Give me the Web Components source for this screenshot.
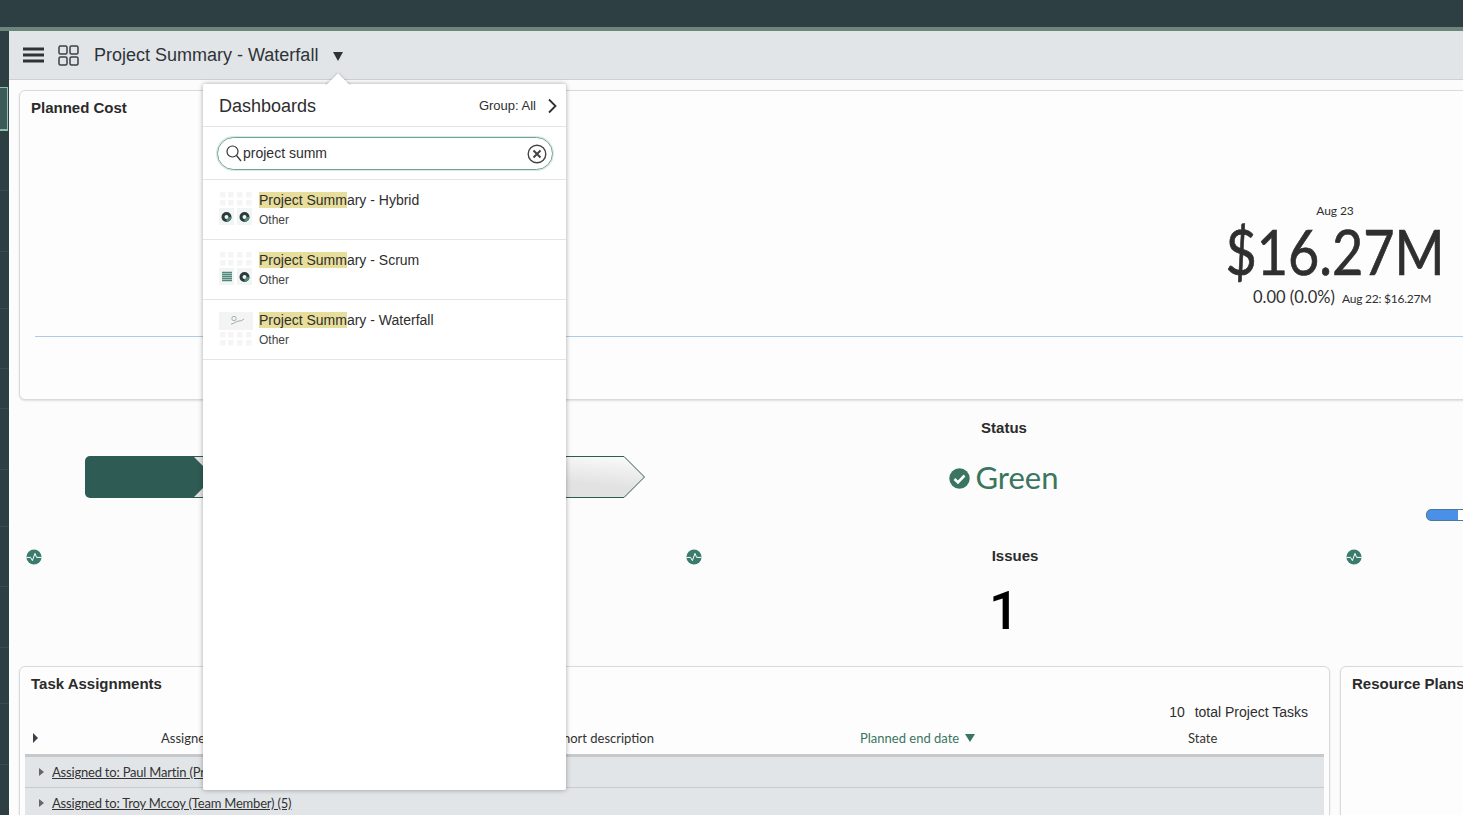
<!DOCTYPE html>
<html lang="en">
<head>
<meta charset="utf-8">
<title>Project Summary - Waterfall</title>
<style>
  html, body { margin: 0; height: 100%; overflow: hidden; background: #fcfcfc; }
  body { font-family: 'Liberation Sans', Arial, sans-serif; color: #2e2e2e; }
</style>
</head>
<body>
<app-shell>
  <dash-header title-text="Project Summary - Waterfall"></dash-header>
  <summary-board></summary-board>
  <dash-popover search="project summ">
    <dash-item kind="hybrid" match="Project Summ" rest="ary - Hybrid" group="Other"></dash-item>
    <dash-item kind="scrum" match="Project Summ" rest="ary - Scrum" group="Other"></dash-item>
    <dash-item kind="waterfall" match="Project Summ" rest="ary - Waterfall" group="Other"></dash-item>
  </dash-popover>
</app-shell>

<script>
const SANS = "'Liberation Sans', Arial, sans-serif";
const SOURCE = "Lato, 'Noto Sans', sans-serif";

class AppShell extends HTMLElement {
  connectedCallback() {
    const root = this.attachShadow({ mode: 'open' });
    // faint separators of the side rail, y of each below the highlighted entry
    const gaps = [60, 61, 57, 60, 40, 61, 57, 60, 61, 56, 61];
    const seps = gaps.map(h => `<b style="height:${h - 1}px"></b>`).join('');
    root.innerHTML = `
      <style>
        :host { display: flex; flex-direction: column; position: relative; width: 100%; height: 815px; overflow: hidden; background: #fcfcfc; }
        .top { height: 27px; background: #2e3f43; flex: none; }
        .strip { height: 4px; background: #6d867b; flex: none; }
        .body { display: flex; flex: 1; min-height: 0; }
        .rail { width: 9px; flex: none; background: #2e3f43; display: flex; flex-direction: column; }
        .rail i { display: block; flex: none; box-sizing: border-box; height: 44px; margin-top: 56px; background: #3b5a58; border: 1px solid #8fc0ae; border-left: 0; border-bottom-width: 2px; width: 8px; }
        .rail b { display: block; flex: none; border-bottom: 1px solid #384b4f; }
        .main { flex: 1; min-width: 0; display: flex; flex-direction: column; overflow: hidden; }
      </style>
      <div class="top"></div>
      <div class="strip"></div>
      <div class="body">
        <div class="rail"><i></i>${seps}</div>
        <div class="main"><slot></slot></div>
      </div>
      <slot name="over"></slot>`;
    this.querySelector('dash-popover').slot = 'over';
  }
}

class DashHeader extends HTMLElement {
  connectedCallback() {
    const root = this.attachShadow({ mode: 'open' });
    root.innerHTML = `
      <style>
        :host { display: flex; align-items: center; height: 48px; flex: none; background: #e2e5e8; border-bottom: 1px solid #ced1d4; box-sizing: content-box; padding-left: 14px; color: #2e3338; }
        .burger { width: 21px; height: 16px; margin-right: 14px; }
        .grid { width: 21px; height: 21px; margin-right: 15px; }
        .title { font: 18px/24px ${SANS}; white-space: nowrap; }
        .tri { width: 0; height: 0; border: 5px solid transparent; border-top: 9px solid #2e3338; border-bottom: 0; margin-left: 15px; margin-top: 2px; }
      </style>
      <svg class="burger" viewBox="0 0 21 16"><path d="M0 2h21M0 8h21M0 14h21" stroke="#2e3338" stroke-width="3"/></svg>
      <svg class="grid" viewBox="0 0 21 21" fill="none" stroke="#3a4045" stroke-width="1.5">
        <rect x="1" y="1" width="8" height="8" rx="1.5"/><rect x="12" y="1" width="8" height="8" rx="1.5"/>
        <rect x="1" y="12" width="8" height="8" rx="1.5"/><rect x="12" y="12" width="8" height="8" rx="1.5"/>
      </svg>
      <span class="title">${this.getAttribute('title-text')}</span>
      <span class="tri"></span>`;
  }
}

class HealthIcon extends HTMLElement {
  connectedCallback() {
    const root = this.attachShadow({ mode: 'open' });
    root.innerHTML = `
      <style>:host { display: block; width: 16px; height: 16px; } svg { display: block; }</style>
      <svg width="16" height="16" viewBox="0 0 16 16"><circle cx="8" cy="8" r="7.6" fill="#3b7b6d"/>
      <path d="M0.5 8.4H4.6L6.4 11.6L9 4.4L10.6 8.4H15.5" fill="none" stroke="#fff" stroke-width="1"/></svg>`;
  }
}

class SummaryBoard extends HTMLElement {
  connectedCallback() {
    const root = this.attachShadow({ mode: 'open' });
    root.innerHTML = `
      <style>
        :host { display: block; font-family: ${SANS}; }
        .card { background: #fdfdfd; border: 1px solid #d8dadc; border-radius: 6px; box-sizing: border-box; box-shadow: 0 1px 2px rgba(0,0,0,.12); }
        .card h3 { margin: 0; font: bold 15px/18px ${SANS}; color: #2b2b2b; }

        .cost { height: 310px; margin: 10px -20px 0 10px; padding: 8px 11px; display: flex; flex-direction: column; }
        .metric { margin: 86px 27px 0 auto; width: 218px; text-align: center; font-family: ${SOURCE}; color: #2f2f2f; }
        .metric .date { font-size: 12px; line-height: 16px; letter-spacing: -.1px; }
        .metric .big { font-size: 62px; line-height: 66px; white-space: nowrap; transform: scaleX(.87); -webkit-text-stroke: .7px #2f2f2f; margin: -1px -20px 0; }
        .metric .delta { font-size: 16.500px; line-height: 22px; white-space: nowrap; padding-left: 14px; margin: 2px -20px 0; }
        .metric .delta small { font-size: 12px; margin-left: 3px; letter-spacing: -.25px; }
        .line { height: 1px; background: #aecbe6; margin: 26px -11px 0 4px; }

        .tiles { display: grid; grid-template-columns: 660px 660px 1fr; }
        .tile { height: 140px; position: relative; box-sizing: border-box; }
        .tile.low { height: 126px; }
        .stage { display: block; margin: 56px 0 0 76px; width: 560px; height: 42px; }
        .center { text-align: center; }
        .center h4 { margin: 0; font: bold 15px/18px ${SANS}; color: #2b2b2b; }
        .status { padding: 19px 0 0 10px; }
        .green { display: flex; align-items: center; justify-content: center; gap: 5px; margin-top: 22px; font: 31px/40px ${SOURCE}; color: #3a7560; }
        .green span { margin-top: -2px; }
        .bar { width: 60px; height: 12px; background: linear-gradient(90deg, #4a90e8 31px, #fff 31px); border-radius: 5px 0 0 5px; margin: 109px 0 0 97px; border: 1px solid #4d7a91; box-sizing: border-box; }
        .pulse { padding: 9px 0 0 17px; }
        .pulse.over { position: absolute; left: 0; top: 0; }
        .issues { padding: 7px 0 0 32px; }
        .num { font: 500 53px/60px Roboto, ${SANS}; color: #000; margin-top: 16px; padding-right: 22px; }

        .lower { display: grid; grid-template-columns: 1311px 160px; gap: 10px; margin-left: 10px; }
        .tasks { height: 200px; padding: 8px 5px 0; }
        .tasks h3 { padding-left: 6px; }
        .total { text-align: right; font: 14px/18px ${SANS}; padding-right: 16px; margin-top: 10px; }
        .total span { margin-right: 6px; }
        .head { position: relative; display: grid; grid-template-columns: 531px 304px 328px 1fr; height: 26px; padding-bottom: 3px; margin-top: 4px; align-items: center; font: 13px/16px ${SOURCE}; border-bottom: 3px solid #c6c8ca; color: #333; box-sizing: content-box; }
        .head .first { padding-left: 136px; white-space: nowrap; }
        .head .tri { position: absolute; left: 8px; top: 8px; width: 0; height: 0; border: 5px solid transparent; border-left: 5.500px solid #3a4045; border-right: 0; }
        .head .sort { color: #3a7560; display: flex; gap: 6px; align-items: center; white-space: nowrap; }
        .head .sort i { width: 0; height: 0; border: 5px solid transparent; border-top: 8px solid #3a7560; border-bottom: 0; }
        .row { display: flex; align-items: center; gap: 8px; height: 30px; background: #e2e5e8; border-bottom: 1px solid #c8cbcd; padding-left: 14px; font: 13px/16px ${SOURCE}; letter-spacing: -.2px; color: #333; }
        .row i { width: 0; height: 0; border: 4px solid transparent; border-left: 5px solid #666; border-right: 0; }
        .row u { white-space: nowrap; }
        .plans { padding: 8px 11px; height: 200px; }
        .plans h3 { white-space: nowrap; }
      </style>

      <section class="card cost">
        <h3>Planned Cost</h3>
        <div class="metric">
          <div class="date">Aug 23</div>
          <div class="big">$16.27M</div>
          <div class="delta">0.00 (0.0%) <small>Aug 22: $16.27M</small></div>
        </div>
        <div class="line"></div>
      </section>

      <div class="tiles">
        <div class="tile">
          <svg class="stage" viewBox="0 0 560 42">
            <defs><linearGradient id="g" x1="0" x2="1" y1="1" y2="0"><stop offset="0.6" stop-color="#e2e2e2"/><stop offset="1" stop-color="#fbfbfb"/></linearGradient></defs>
            <path d="M108 .5H539L559.500 21L539 41.500H108Z" fill="url(#g)" stroke="#2e5b54"/>
            <path d="M5 0H108L129 21L108 42H5A5 5 0 0 1 0 37V5A5 5 0 0 1 5 0Z" fill="#2e5b54"/>
          </svg>
        </div>
        <div class="tile center">
          <div class="status">
            <h4>Status</h4>
            <div class="green">
              <svg width="21" height="21" viewBox="0 0 21 21"><circle cx="10.500" cy="10.500" r="10.200" fill="#3a7560"/><path d="M5.500 11L9 14.500L15.500 7.500" fill="none" stroke="#fff" stroke-width="2.600"/></svg>
              <span>Green</span>
            </div>
          </div>
        </div>
        <div class="tile"><div class="bar"></div></div>
        <div class="tile low pulse"><health-icon></health-icon></div>
        <div class="tile low center">
          <div class="pulse over"><health-icon></health-icon></div>
          <div class="issues">
            <h4>Issues</h4>
            <div class="num">1</div>
          </div>
        </div>
        <div class="tile low pulse"><health-icon></health-icon></div>
      </div>

      <div class="lower">
        <section class="card tasks">
          <h3>Task Assignments</h3>
          <div class="total"><span>10</span> total Project Tasks</div>
          <div class="head">
            <i class="tri"></i>
            <div class="first">Assigned to</div>
            <div>Short description</div>
            <div class="sort">Planned end date <i></i></div>
            <div>State</div>
          </div>
          <div class="row"><i></i><u>Assigned to: Paul Martin (Project Manager) (5)</u></div>
          <div class="row"><i></i><u>Assigned to: Troy Mccoy (Team Member) (5)</u></div>
        </section>
        <section class="card plans"><h3>Resource Plans</h3></section>
      </div>`;
  }
}

class DashPopover extends HTMLElement {
  connectedCallback() {
    const root = this.attachShadow({ mode: 'open' });
    root.innerHTML = `
      <style>
        :host { display: block; position: absolute; left: 203px; top: 84px; width: 363px; height: 706px; background: #fff; box-shadow: 0 0 5px rgba(0,0,0,.35); border-radius: 2px; font-family: ${SANS}; color: #2e2e2e; }
        .caret { position: absolute; top: -13px; left: 122px; width: 26px; height: 14px; overflow: hidden; }
        .caret::before { content: ''; position: absolute; left: 4px; top: 6px; width: 18px; height: 18px; background: #fff; transform: rotate(45deg); box-shadow: 0 0 3px rgba(0,0,0,.25); }
        .hd { display: flex; align-items: center; height: 40px; padding: 2px 9px 0 16px; border-bottom: 1px solid #e4e4e4; box-sizing: content-box; }
        .hd .t { font-size: 18px; flex: 1; }
        .hd .g { font-size: 13px; margin: 0 11px 2px 0; }
        .searchwrap { padding: 10px 13px 9px 14px; border-bottom: 1px solid #e4e4e4; }
        .search { display: flex; align-items: center; height: 33px; border: 1.5px solid #6ea596; border-radius: 17px; box-sizing: border-box; padding: 0 5px 0 8px; font-size: 14px; box-shadow: 0 0 0 1px rgba(110,165,150,.25); }
        .search span { flex: 1; padding: 0 0 2px 1px; }
      </style>
      <div class="caret"></div>
      <div class="hd">
        <span class="t">Dashboards</span><span class="g">Group: All</span>
        <svg width="10" height="16" viewBox="0 0 10 16"><path d="M2 1.500L8.500 8L2 14.500" fill="none" stroke="#2e2e2e" stroke-width="1.800"/></svg>
      </div>
      <div class="searchwrap">
        <div class="search">
          <svg width="16" height="17" viewBox="0 0 16 17" fill="none" stroke="#333" stroke-width="1.200"><circle cx="6.500" cy="6.500" r="5.500"/><path d="M10.500 10.500L15 16"/></svg>
          <span>${this.getAttribute('search')}</span>
          <svg width="20" height="20" viewBox="0 0 20 20" fill="none" stroke="#444"><circle cx="10" cy="10" r="8.800" stroke-width="1.400"/><path d="M6.500 6.500L13.500 13.500M13.500 6.500L6.500 13.500" stroke-width="2"/></svg>
        </div>
      </div>
      <slot></slot>`;
  }
}

class DashItem extends HTMLElement {
  connectedCallback() {
    const root = this.attachShadow({ mode: 'open' });
    const kind = this.getAttribute('kind');
    const dots = y => [1, 9, 18, 27].map(x => `<rect x="${x}" y="${y}" width="5.500" height="5.500" fill="#f5f5f5"/>`).join('');
    const donut = x => `<rect x="${x}" y="16" width="15" height="17" fill="#f3f5f4"/>
      <circle cx="${x + 7.500}" cy="25" r="3.500" fill="none" stroke="#2b3a3a" stroke-width="3"/>
      <path d="M${x + 7.500} 28.500a3.500 3.500 0 0 0 3.500 -3.500" fill="none" stroke="#4d8a7c" stroke-width="3"/>`;
    let thumb = '';
    if (kind === 'waterfall') {
      thumb = `<rect x="0" y="0" width="34" height="18" fill="#f4f4f4"/>
        <path d="M12 12c3 0 5-3 8-3s3-1 5-2" fill="none" stroke="#8a9a94" stroke-width=".8"/><circle cx="15" cy="6.500" r="2.200" fill="none" stroke="#8aa79d" stroke-width=".8"/>
        ${dots(20)}${dots(28)}`;
    } else {
      thumb = dots(0) + dots(8) + (kind === 'scrum'
        ? `<rect x="0" y="16" width="15" height="17" fill="#f3f5f4"/><path d="M3 20.500h10M3 22.500h10M3 24.500h10M3 26.500h10M3 28.500h10" stroke="#4d8a7c" stroke-width="1.300"/>`
        : donut(0)) + donut(18);
    }
    root.innerHTML = `
      <style>
        :host { display: flex; height: 59px; border-bottom: 1px solid #e4e4e4; padding: 0 0 0 16px; box-sizing: content-box; }
        svg { margin: 12px 6px 0 0; flex: none; }
        .txt { padding-top: 11px; }
        .name { font-size: 14px; line-height: 19px; color: #2e2e2e; white-space: nowrap; }
        mark { background: #e8de9c; color: inherit; }
        .grp { font-size: 12px; line-height: 20px; color: #444; }
      </style>
      <svg width="34" height="35" viewBox="0 0 34 35">${thumb}</svg>
      <div class="txt">
        <div class="name"><mark>${this.getAttribute('match')}</mark>${this.getAttribute('rest')}</div>
        <div class="grp">${this.getAttribute('group')}</div>
      </div>`;
  }
}

customElements.define('app-shell', AppShell);
customElements.define('dash-header', DashHeader);
customElements.define('health-icon', HealthIcon);
customElements.define('summary-board', SummaryBoard);
customElements.define('dash-popover', DashPopover);
customElements.define('dash-item', DashItem);
</script>
</body>
</html>
